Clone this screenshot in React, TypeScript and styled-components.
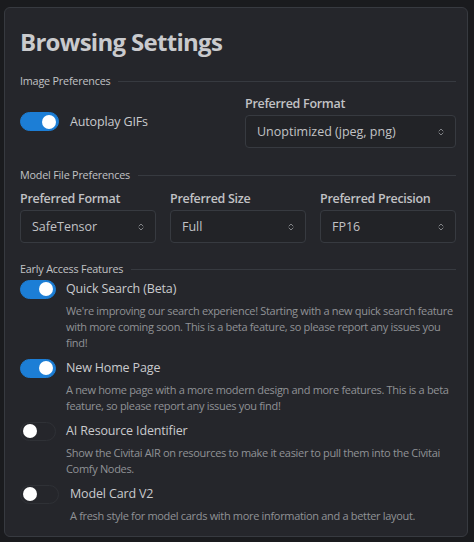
import React from "react";
import styled, { createGlobalStyle } from "styled-components";

const Global = createGlobalStyle`
  html, body { margin: 0; padding: 0; background: #1a1b1e; }
  body { font-family: "Open Sans", "Noto Sans", sans-serif; color: #c1c2c5; }
  * { box-sizing: border-box; }
`;

const Page = styled.div`
  padding: 7px 6px 6px 4px;
  width: 474px;
  height: 542px;
`;

const Card = styled.div`
  background: #25262b;
  border: 1px solid #373a40;
  border-radius: 6px;
  padding: 19px 11px 0 15px;
  height: 530px;
  display: flex;
  flex-direction: column;
`;

const Title = styled.h1`
  margin: 0;
  font-size: 24px;
  line-height: 30px;
  font-weight: 700;
  color: #c9cacd;
  letter-spacing: -0.7px;
`;

const Divider = styled.div<{ $mt: number }>`
  display: flex;
  align-items: center;
  gap: 8px;
  margin-top: ${(p) => p.$mt}px;
  font-size: 10.8px;
  letter-spacing: -0.2px;
  line-height: 16px;
  color: #c1c2c5;
  &::after {
    content: "";
    flex: 1;
    border-top: 1px solid #373a40;
  }
`;

const ImageRow = styled.div`
  display: grid;
  grid-template-columns: 1fr 211px;
  gap: 15px;
  align-items: center;
  margin-top: 6px;
`;

const ModelRow = styled.div`
  display: grid;
  grid-template-columns: repeat(3, 1fr);
  gap: 14px;
  margin-top: 7px;
`;

const Field = styled.div`
  display: flex;
  flex-direction: column;
  gap: 2px;
`;

const FieldLabel = styled.div`
  font-size: 12.5px;
  line-height: 18px;
  font-weight: 600;
  letter-spacing: -0.3px;
  color: #c1c2c5;
`;

const SelectBox = styled.div`
  height: 33px;
  border: 1px solid #373a40;
  border-radius: 4px;
  background: #222327;
  display: flex;
  align-items: center;
  justify-content: space-between;
  padding: 0 9px 0 11px;
  font-size: 12.5px;
  color: #c1c2c5;
`;

const ToggleRow = styled.label<{ $gap: number }>`
  display: flex;
  align-items: center;
  gap: ${(p) => p.$gap}px;
  font-size: 12.5px;
  letter-spacing: -0.15px;
  color: #c9cacd;
`;

const Track = styled.span<{ $on: boolean; $w: number }>`
  position: relative;
  display: inline-block;
  width: ${(p) => p.$w}px;
  height: 19px;
  border-radius: 10px;
  background: ${(p) => (p.$on ? "#1c7ed6" : "#25262b")};
  border: 1px solid ${(p) => (p.$on ? "#1c7ed6" : "#2f3136")};
  flex: none;
  &::after {
    content: "";
    position: absolute;
    top: 1.5px;
    width: 14px;
    height: 14px;
    border-radius: 50%;
    background: #fff;
    ${(p) => (p.$on ? "right: 2px;" : "left: 2px;")}
  }
`;

const Features = styled.div`
  display: flex;
  flex-direction: column;
  gap: 7px;
  margin-top: 2px;
`;

const Feature = styled.div<{ $indent: number }>`
  display: grid;
  grid-template-columns: ${(p) => p.$indent}px 1fr;
  row-gap: 4px;
`;

const FeatureTitle = styled.div`
  font-size: 12.5px;
  line-height: 20px;
  letter-spacing: -0.15px;
  color: #c9cacd;
  display: flex;
  align-items: center;
`;

const FeatureDesc = styled.div`
  grid-column: 2;
  font-size: 11px;
  letter-spacing: -0.32px;
  line-height: 16px;
  color: #909296;
`;

const ToggleCell = styled.div`
  display: flex;
  align-items: center;
`;

const Chevrons = () => (
  <svg width="10" height="14" viewBox="0 0 15 15" fill="none">
    <path
      d="M4.5 6L7.5 3L10.5 6M4.5 9L7.5 12L10.5 9"
      stroke="#909296"
      strokeWidth="1.3"
      strokeLinecap="round"
      strokeLinejoin="round"
    />
  </svg>
);

const Select = ({ value }: { value: string }) => (
  <SelectBox>
    <span>{value}</span>
    <Chevrons />
  </SelectBox>
);

const features = [
  {
    title: "Quick Search (Beta)",
    on: true,
    w: 36,
    indent: 46,
    desc: "We're improving our search experience! Starting with a new quick search feature with more coming soon. This is a beta feature, so please report any issues you find!",
  },
  {
    title: "New Home Page",
    on: true,
    w: 36,
    indent: 46,
    desc: "A new home page with a more modern design and more features. This is a beta feature, so please report any issues you find!",
  },
  {
    title: "AI Resource Identifier",
    on: false,
    w: 36,
    indent: 46,
    desc: "Show the Civitai AIR on resources to make it easier to pull them into the Civitai Comfy Nodes.",
  },
  {
    title: "Model Card V2",
    on: false,
    w: 39,
    indent: 50,
    desc: "A fresh style for model cards with more information and a better layout.",
  },
];

export default function App() {
  return (
    <Page>
      <Global />
      <Card>
        <Title>Browsing Settings</Title>
        <Divider $mt={16}>Image Preferences</Divider>
        <ImageRow>
          <ToggleRow $gap={11}>
            <Track $on $w={39} />
            Autoplay GIFs
          </ToggleRow>
          <Field>
            <FieldLabel>Preferred Format</FieldLabel>
            <Select value="Unoptimized (jpeg, png)" />
          </Field>
        </ImageRow>
        <Divider $mt={19}>Model File Preferences</Divider>
        <ModelRow>
          <Field>
            <FieldLabel>Preferred Format</FieldLabel>
            <Select value="SafeTensor" />
          </Field>
          <Field>
            <FieldLabel>Preferred Size</FieldLabel>
            <Select value="Full" />
          </Field>
          <Field>
            <FieldLabel>Preferred Precision</FieldLabel>
            <Select value="FP16" />
          </Field>
        </ModelRow>
        <Divider $mt={18}>Early Access Features</Divider>
        <Features>
          {features.map((f) => (
            <Feature key={f.title} $indent={f.indent}>
              <ToggleCell>
                <Track $on={f.on} $w={f.w} />
              </ToggleCell>
              <FeatureTitle>{f.title}</FeatureTitle>
              <FeatureDesc>{f.desc}</FeatureDesc>
            </Feature>
          ))}
        </Features>
      </Card>
    </Page>
  );
}
